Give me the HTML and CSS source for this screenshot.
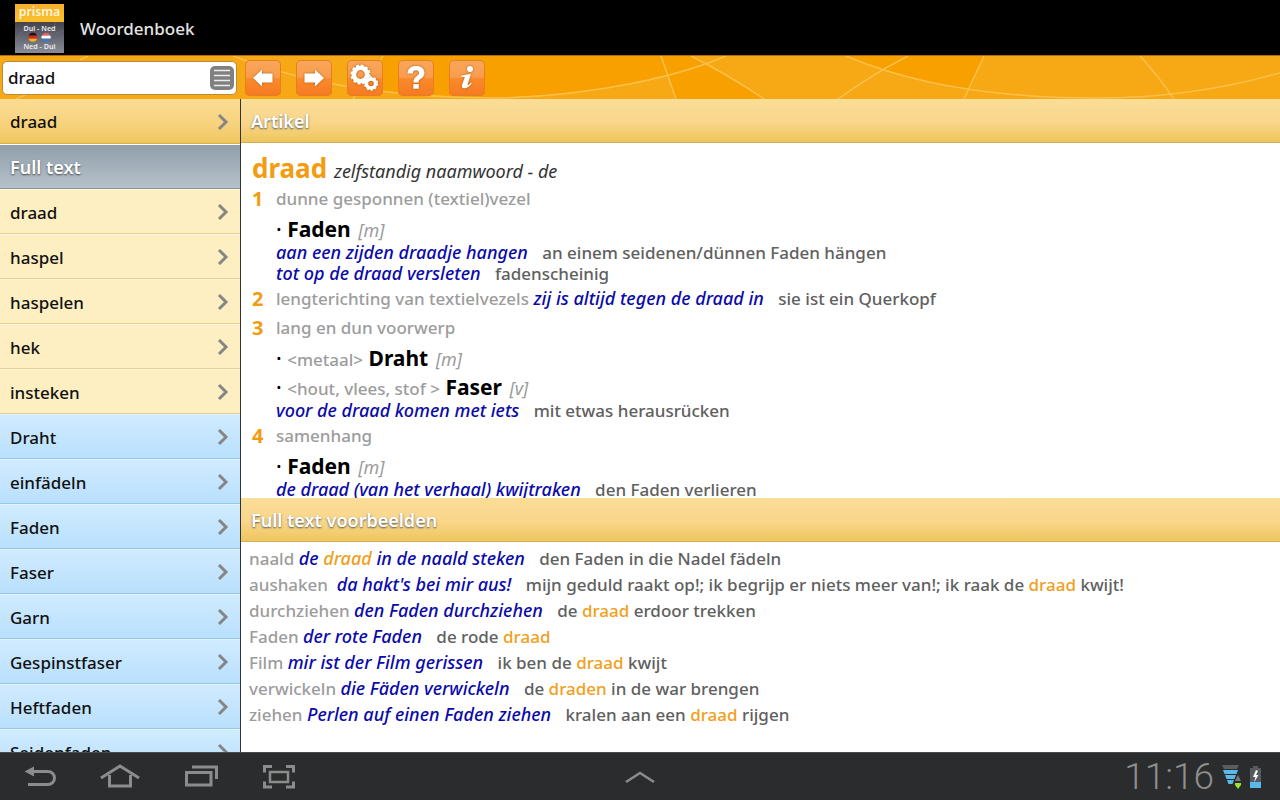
FILE: index.html
```html
<!DOCTYPE html>
<html lang="nl">
<head>
<meta charset="utf-8">
<meta name="viewport" content="width=device-width, initial-scale=1">
<title>Woordenboek</title>
<link rel="stylesheet" href="styles.css">
</head>
<body>
<header class="titlebar">
  <svg class="logo" viewBox="0 0 48 48" aria-hidden="true">
    <defs>
      <linearGradient id="lg-top" x1="0" y1="0" x2="0" y2="1"><stop offset="0" stop-color="#f6b02c"/><stop offset="1" stop-color="#fbc02d"/></linearGradient>
      <linearGradient id="lg-low" x1="0" y1="0" x2="0" y2="1"><stop offset="0" stop-color="#42444e"/><stop offset="1" stop-color="#8a8c98"/></linearGradient>
      <clipPath id="flag-de"><circle cx="17.500" cy="32.500" r="4.500"/></clipPath>
      <clipPath id="flag-nl"><circle cx="30.500" cy="32.500" r="4.500"/></clipPath>
    </defs>
    <rect width="48" height="18" fill="url(#lg-top)"/>
    <rect y="18" width="48" height="30" fill="url(#lg-low)"/>
    <path d="M0 36 L14 18 M26 48 L40 18 M0 42 L48 26" stroke="#777985" stroke-width=".6" opacity=".6"/>
    <text x="24" y="12" text-anchor="middle" class="logo-name">prisma</text>
    <text x="24" y="26" text-anchor="middle" class="logo-pair">Dui - Ned</text>
    <text x="24" y="44" text-anchor="middle" class="logo-pair">Ned - Dui</text>
    <g clip-path="url(#flag-de)"><rect x="12" y="28" width="11" height="3" fill="#1b1410"/><rect x="12" y="31" width="11" height="3" fill="#d8291c"/><rect x="12" y="34" width="11" height="4" fill="#f2b51e"/></g>
    <g clip-path="url(#flag-nl)"><rect x="25" y="28" width="11" height="3" fill="#e0605a"/><rect x="25" y="31" width="11" height="3" fill="#fff"/><rect x="25" y="34" width="11" height="4" fill="#3d7cc0"/></g>
  </svg>
  <h1 class="app-name">Woordenboek</h1>
</header>

<div class="toolbar">
  <svg class="toolbar-art" viewBox="0 0 1280 44" preserveAspectRatio="none" aria-hidden="true">
    <path fill="#f7a000" d="M380 0 H661 L668 18 C610 34 560 42 500 43 C440 42 400 38 360 32Z"/>
    <path fill="#f7a000" d="M661 0 H691 L764 44 H676Z"/>
    <path fill="#f7a000" d="M846 0 H984 L970 35 C935 30 880 14 846 0Z"/>
    <g fill="none" stroke="#fbc04c" stroke-width="1.500">
      <path d="M233 0 C290 22 370 43 500 43 C600 40 680 20 726 0"/>
      <path d="M661 0 L676 44 M691 0 Q730 20 764 44 M908 0 Q870 20 838 44 M984 0 L964 44 M1140 0 Q1158 20 1174 44 M383 0 L353 44 M88 0 L80 4 M27 39 L16 44"/>
      <path d="M846 0 C920 32 1010 43 1094 43 C1160 43 1220 35 1280 17"/>
    </g>
  </svg>
  <form class="search" role="search">
    <label class="visually-hidden" for="q">Zoeken</label>
    <input class="search-input" id="q" type="text" value="draad">
    <button class="search-list" type="button" aria-label="Lijst">
      <svg viewBox="0 0 24 24" aria-hidden="true"><rect width="24" height="24" rx="5" fill="#808080"/><path d="M4 4.500H20M4 9.500H20M4 14.500H20M4 19.500H20" stroke="#ececec" stroke-width="1.500"/></svg>
    </button>
  </form>
  <nav class="tools">
    <button class="tool" type="button" aria-label="Terug"><svg viewBox="0 0 36 36" aria-hidden="true"><path d="M8 18 L17 9.500 V13.500 H27.500 V22.500 H17 V26.500Z"/></svg></button>
    <button class="tool" type="button" aria-label="Vooruit"><svg viewBox="0 0 36 36" aria-hidden="true"><path d="M28 18 L19 9.500 V13.500 H8.500 V22.500 H19 V26.500Z"/></svg></button>
    <button class="tool" type="button" aria-label="Instellingen"><svg viewBox="0 0 36 36" aria-hidden="true">
      <g class="gear"><circle cx="13.500" cy="14.500" r="6.700" stroke-width="4.600"/><circle cx="13.500" cy="14.500" r="9" stroke-width="2.200" stroke-dasharray="2.800 1.912"/><circle cx="24" cy="23.500" r="4.500" stroke-width="3.400"/><circle cx="24" cy="23.500" r="6.200" stroke-width="2" stroke-dasharray="2.200 1.696"/></g></svg></button>
    <button class="tool" type="button" aria-label="Help"><svg viewBox="0 0 36 36" aria-hidden="true"><path d="M9.500 13.500 C9.500 8.500 13 6 18 6 C23 6 26.500 8.600 26.500 12.700 C26.500 16 24.500 17.500 22.500 19 C21 20 20.500 20.700 20.500 22.500 H15.500 C15.300 19.500 16.300 18 18.300 16.500 C20 15.200 21 14.500 21 13 C21 11.300 19.800 10.300 18 10.300 C16 10.300 14.800 11.500 14.800 13.500Z M15.300 24 H20.800 V28.700 H15.300Z"/></svg></button>
    <button class="tool" type="button" aria-label="Informatie"><svg viewBox="0 0 36 36" aria-hidden="true"><circle cx="21" cy="9" r="3"/><path d="M12.500 15.500 L22 13.700 L18.600 24.500 C18.400 25.500 19.300 25.200 21.800 22.700 L22.700 23.500 C20 27 17.500 28.300 15.200 28.300 C12.900 28.300 12.500 26.700 13 25 L15.800 17 H12.200Z"/></svg></button>
  </nav>
</div>

<main class="main">
  <nav class="sidebar">
    <a class="row row-current" href="#draad">draad<svg class="chevron" viewBox="0 0 12 18"><path d="M2 2 L9 9 L2 16"/></svg></a>
    <h2 class="row row-heading">Full text</h2>
    <a class="row row-nl" href="#a1">draad<svg class="chevron" viewBox="0 0 12 18"><path d="M2 2 L9 9 L2 16"/></svg></a>
    <a class="row row-nl" href="#a2">haspel<svg class="chevron" viewBox="0 0 12 18"><path d="M2 2 L9 9 L2 16"/></svg></a>
    <a class="row row-nl" href="#a3">haspelen<svg class="chevron" viewBox="0 0 12 18"><path d="M2 2 L9 9 L2 16"/></svg></a>
    <a class="row row-nl" href="#a4">hek<svg class="chevron" viewBox="0 0 12 18"><path d="M2 2 L9 9 L2 16"/></svg></a>
    <a class="row row-nl" href="#a5">insteken<svg class="chevron" viewBox="0 0 12 18"><path d="M2 2 L9 9 L2 16"/></svg></a>
    <a class="row row-de" href="#b1">Draht<svg class="chevron" viewBox="0 0 12 18"><path d="M2 2 L9 9 L2 16"/></svg></a>
    <a class="row row-de" href="#b2">einfädeln<svg class="chevron" viewBox="0 0 12 18"><path d="M2 2 L9 9 L2 16"/></svg></a>
    <a class="row row-de" href="#b3">Faden<svg class="chevron" viewBox="0 0 12 18"><path d="M2 2 L9 9 L2 16"/></svg></a>
    <a class="row row-de" href="#b4">Faser<svg class="chevron" viewBox="0 0 12 18"><path d="M2 2 L9 9 L2 16"/></svg></a>
    <a class="row row-de" href="#b5">Garn<svg class="chevron" viewBox="0 0 12 18"><path d="M2 2 L9 9 L2 16"/></svg></a>
    <a class="row row-de" href="#b6">Gespinstfaser<svg class="chevron" viewBox="0 0 12 18"><path d="M2 2 L9 9 L2 16"/></svg></a>
    <a class="row row-de" href="#b7">Heftfaden<svg class="chevron" viewBox="0 0 12 18"><path d="M2 2 L9 9 L2 16"/></svg></a>
    <a class="row row-de" href="#b8">Seidenfaden<svg class="chevron" viewBox="0 0 12 18"><path d="M2 2 L9 9 L2 16"/></svg></a>
  </nav>

  <div class="content">
    <section class="panel panel-article">
      <h2 class="panel-title">Artikel</h2>
      <article class="article" id="draad">
        <h3 class="lemma">draad <i class="grammar">zelfstandig naamwoord - de</i></h3>
        <div class="sense">
          <b class="num">1</b>
          <div>
            <p class="gloss">dunne gesponnen (textiel)vezel</p>
            <p class="trans">· <b>Faden</b> <i>[m]</i></p>
            <p class="example"><i>aan een zijden draadje hangen</i> <span>an einem seidenen/dünnen Faden hängen</span></p>
            <p class="example"><i>tot op de draad versleten</i> <span>fadenscheinig</span></p>
          </div>
        </div>
        <div class="sense">
          <b class="num">2</b>
          <div>
            <p class="gloss example">lengterichting van textielvezels <i>zij is altijd tegen de draad in</i> <span>sie ist ein Querkopf</span></p>
          </div>
        </div>
        <div class="sense">
          <b class="num">3</b>
          <div>
            <p class="gloss">lang en dun voorwerp</p>
            <p class="trans">· <small>&lt;metaal&gt;</small> <b>Draht</b> <i>[m]</i></p>
            <p class="trans">· <small>&lt;hout, vlees, stof &gt;</small> <b>Faser</b> <i>[v]</i></p>
            <p class="example"><i>voor de draad komen met iets</i> <span>mit etwas herausrücken</span></p>
          </div>
        </div>
        <div class="sense">
          <b class="num">4</b>
          <div>
            <p class="gloss">samenhang</p>
            <p class="trans">· <b>Faden</b> <i>[m]</i></p>
            <p class="example"><i>de draad (van het verhaal) kwijtraken</i> <span>den Faden verlieren</span></p>
          </div>
        </div>
      </article>
    </section>

    <section class="panel panel-examples">
      <h2 class="panel-title">Full text voorbeelden</h2>
      <div class="hits">
        <p class="hit example">naald <i>de <mark>draad</mark> in de naald steken</i> <span>den Faden in die Nadel fädeln</span></p>
        <p class="hit example">aushaken &nbsp;<i>da hakt's bei mir aus!</i> <span>mijn geduld raakt op!; ik begrijp er niets meer van!; ik raak de <mark>draad</mark> kwijt!</span></p>
        <p class="hit example">durchziehen <i>den Faden durchziehen</i> <span>de <mark>draad</mark> erdoor trekken</span></p>
        <p class="hit example">Faden <i>der rote Faden</i> <span>de rode <mark>draad</mark></span></p>
        <p class="hit example">Film <i>mir ist der Film gerissen</i> <span>ik ben de <mark>draad</mark> kwijt</span></p>
        <p class="hit example">verwickeln <i>die Fäden verwickeln</i> <span>de <mark>draden</mark> in de war brengen</span></p>
        <p class="hit example">ziehen <i>Perlen auf einen Faden ziehen</i> <span>kralen aan een <mark>draad</mark> rijgen</span></p>
      </div>
    </section>
  </div>
</main>

<footer class="sysbar">
  <div class="sys-nav">
    <button class="sys-btn" type="button" aria-label="Vorige"><svg viewBox="0 0 40 28"><path d="M13 8.500 H28 A6 6 0 0 1 28 21.500 H8" stroke-width="3"/><path class="solid" d="M4.500 8.500 L14 3.500 V13.500Z" stroke="none"/></svg></button>
    <button class="sys-btn" type="button" aria-label="Startscherm"><svg viewBox="0 0 40 28"><path d="M1 15 L20 3 L39 15" stroke-width="3"/><path d="M9.500 12 V23 H30.500 V12" stroke-width="3"/></svg></button>
    <button class="sys-btn" type="button" aria-label="Recente apps"><svg viewBox="0 0 40 28"><path d="M6.500 9.500 H31 V22 H6.500Z" stroke-width="3"/><path d="M12 4 H36.500 V16" stroke-width="3"/></svg></button>
    <button class="sys-btn" type="button" aria-label="Schermafbeelding"><svg viewBox="0 0 40 28"><path d="M10 9 H28 V19 H10Z" stroke-width="2.500"/><path d="M4.500 9.500 V3.500 H12 M26 3.500 H33.500 V9.500 M33.500 18.500 V24 H26 M12 24 H4.500 V18.500" stroke-width="3"/></svg></button>
  </div>
  <button class="sys-up" type="button" aria-label="Meer"><svg viewBox="0 0 30 14"><path d="M1 12 L15 3 L29 12" stroke-width="2.500"/></svg></button>
  <div class="sys-status">
    <time class="clock">11:16</time>
    <svg class="signal" viewBox="0 0 20 24" aria-hidden="true"><path fill="#5b5e60" d="M0 0H17L15 4H2Z"/><path fill="#5bb8ea" d="M1 5H16L14.500 9H2.500Z M3 10H14L12.500 14H4.500Z M5 15H12L10.500 19H6.500Z"/><path fill="#777" d="M16 10 L19 16 H13Z"/><path fill="#9be22d" d="M13 18H19V20L16 24L13 20Z"/></svg>
    <svg class="battery" viewBox="0 0 11 22" aria-hidden="true"><path fill="#555b5f" d="M3 0H8V2H11V16H0V2H3Z"/><path fill="#5bb8ea" d="M0 16H11V22H0Z"/><path fill="#fff" d="M6 4 L3 11 H5.500 L4 16.500 L8.500 9 H6 L8 5Z"/></svg>
  </div>
</footer>
</body>
</html>
```

FILE: styles.css
```css
* {
  box-sizing: border-box;
}

body {
  display: flex;
  flex-direction: column;
  height: 100vh;
  margin: 0;
  overflow: hidden;
  background: #fff;
  color: #111;
  font: 500 17px/21px "Noto Sans", "Open Sans", sans-serif;
}

h1, h2, h3, p {
  margin: 0;
  font-weight: 500;
}

button {
  padding: 0;
  border: 0;
  background: none;
}

svg {
  display: block;
}

.visually-hidden {
  position: absolute;
  width: 1px;
  height: 1px;
  overflow: hidden;
  clip-path: inset(50%);
}

/* Title bar */
.titlebar {
  display: flex;
  flex: none;
  align-items: center;
  gap: 16px;
  height: 55px;
  padding: 2px 15px 0;
  background: #000;
}

.logo {
  width: 49px;
  height: 49px;
}

.logo-name {
  fill: #fff6dc;
  font-size: 12px;
  font-weight: 600;
}

.logo-pair {
  fill: #eee;
  font-size: 7px;
  font-weight: 600;
}

.app-name {
  color: #e4e4e4;
  font-size: 17px;
}

/* Toolbar */
.toolbar {
  position: relative;
  display: flex;
  flex: none;
  align-items: center;
  height: 44px;
  border-top: 1px solid #b06a0a;
  background: #f6a815;
}

.toolbar-art {
  position: absolute;
  inset: 0;
  width: 100%;
  height: 100%;
}

.search {
  position: relative;
  display: flex;
  flex: none;
  align-items: center;
  gap: 4px;
  width: 235px;
  height: 34px;
  margin: 0 8px 0 2px;
  padding: 0 2px 0 5px;
  border: 1px solid #b98a3a;
  border-radius: 5px;
  background: #fff;
}

.search-input {
  flex: 1;
  min-width: 0;
  height: 30px;
  padding: 0;
  border: 0;
  outline: 0;
  background: none;
  color: #111;
  font: inherit;
}

.search-list svg {
  width: 24px;
  height: 24px;
}

.tools {
  position: relative;
  display: flex;
  gap: 15px;
}

.tool {
  width: 36px;
  height: 36px;
  border-radius: 5px;
  background: linear-gradient(#f8a75c 0%, #f99c4c 48%, #fb8a2c 52%, #f47a22 100%);
  box-shadow: inset 0 0 0 1px #e5801c;
}

.tool svg {
  width: 36px;
  height: 36px;
  fill: #fff;
  filter: drop-shadow(0 0 1px #a85a10);
}

.tool .gear {
  fill: none;
  stroke: #fff;
}

/* Main area */
.main {
  display: flex;
  flex: 1;
  min-height: 0;
}

.sidebar {
  flex: none;
  width: 241px;
  overflow: hidden;
  border-right: 1px solid #333;
}

.row {
  display: flex;
  align-items: center;
  justify-content: space-between;
  height: 45px;
  padding: 1px 11px 0 10px;
  color: #111;
  font-size: 17px;
  text-decoration: none;
}

.row-current {
  border-bottom: 1px solid #d9b24c;
  background: linear-gradient(#fadc94, #f7d27c 60%, #efc65f);
}

.row-heading {
  border-top: 1px solid #fff;
  border-bottom: 1px solid #8694a0;
  background: linear-gradient(#909fab, #b6c1ca);
  color: #fff;
  font-size: 18px;
  font-weight: 600;
  text-shadow: 0 1px 2px #444;
}

.row-nl {
  border-top: 1px solid #fff8dc;
  border-bottom: 1px solid #e6cf90;
  background: #fdefc2;
}

.row-de {
  border-top: 1px solid #e4f4ff;
  border-bottom: 1px solid #93c8e8;
  background: linear-gradient(#d0ebff, #b9e0fd);
}

.chevron {
  width: 12px;
  height: 18px;
  fill: none;
  stroke: #868686;
  stroke-width: 3;
}

.content {
  display: flex;
  flex: 1;
  flex-direction: column;
  min-width: 0;
}

.panel {
  min-height: 0;
  overflow: hidden;
}

.panel-article {
  flex: 11 1 0;
}

.panel-examples {
  flex: 7 1 0;
}

.panel-title {
  height: 44px;
  padding: 0 10px;
  border-bottom: 1px solid #cfae5e;
  background: linear-gradient(#fadd98, #f9d68a 55%, #eec65c);
  color: #fff;
  font-size: 18px;
  font-weight: 600;
  line-height: 44px;
  text-shadow: 0 1px 2px #555;
}

/* Article */
.article {
  padding: 9px 11px 0;
}

.lemma {
  color: #f39c12;
  font-size: 26px;
  font-weight: 700;
  line-height: 32px;
}

.grammar {
  color: #333;
  font-size: 18px;
  font-weight: 400;
  line-height: 1;
}

.sense {
  display: grid;
  grid-template-columns: 24px 1fr;
}

.num {
  color: #f39c12;
  font-size: 20px;
  line-height: 29px;
}

.gloss {
  color: #9c9c9c;
  line-height: 29px;
}

.trans {
  margin-top: 4px;
  color: #000;
  font-size: 21px;
  line-height: 25px;
}

.trans i,
.trans small {
  color: #9c9c9c;
  font-size: 17px;
  line-height: 1;
}

.trans i {
  margin-left: 2px;
  font-size: 18px;
  font-weight: 400;
}

.example i {
  color: #0a0aaa;
  font-size: 18px;
  line-height: 1;
}

.example > span {
  margin-left: 10px;
  color: #606060;
}

/* Full text hits */
.hits {
  padding: 4px 8px;
}

.hit {
  color: #9c9c9c;
  line-height: 26px;
}

.hit mark {
  background: none;
  color: #f0a01c;
}

/* System bar */
.sysbar {
  display: grid;
  flex: none;
  grid-template-columns: 1fr auto 1fr;
  align-items: center;
  height: 48px;
  padding: 0 19px 0 18px;
  border-top: 1px solid #47494b;
  background: #2a2c2d;
}

.sys-nav {
  display: flex;
  gap: 40px;
  padding-left: 2px;
}

.sys-btn svg,
.sys-up svg {
  fill: none;
  stroke: #8c8c8c;
}

.sys-btn svg {
  width: 40px;
  height: 28px;
}

.sys-btn .solid {
  fill: #8c8c8c;
}

.sys-up svg {
  width: 30px;
  height: 14px;
}

.sys-status {
  display: flex;
  align-items: center;
  justify-content: flex-end;
  gap: 8px;
}

.clock {
  color: #8e8e8e;
  font: 300 37px/44px Roboto, sans-serif;
}

.signal {
  width: 20px;
  height: 24px;
}

.battery {
  width: 11px;
  height: 22px;
}
```
